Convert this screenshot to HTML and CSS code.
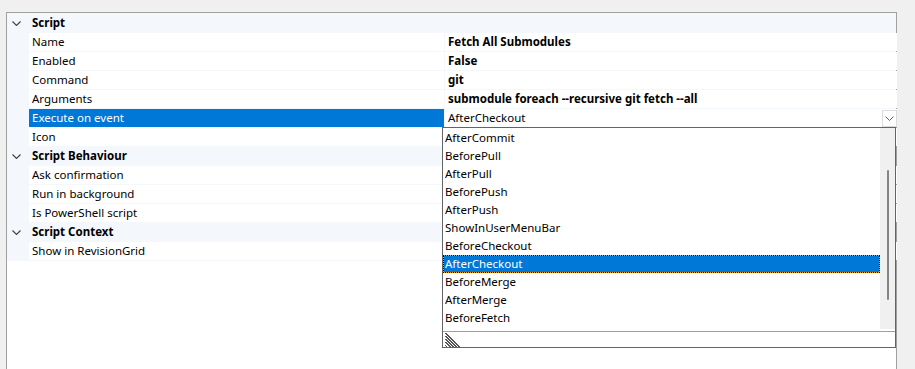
FILE: index.html
```html
<!DOCTYPE html>
<html lang="en">
<head>
    <meta charset="UTF-8">
    <title>Script Properties</title>
    <link rel="stylesheet" href="styles.css">
</head>
<body>
    <div class="grid">
        <div class="props">
            <div class="row category">
                <span class="toggle"><svg width="9" height="5" viewBox="0 0 9 5"><path d="M0.5 0.5 L4.5 4.5 L8.5 0.5" fill="none" stroke="#404040" stroke-width="1.1"/></svg></span>
                <span class="label">Script</span>
            </div>
            <div class="row"><span></span><span class="label">Name</span><span class="value bold">Fetch All Submodules</span></div>
            <div class="row"><span></span><span class="label">Enabled</span><span class="value bold">False</span></div>
            <div class="row"><span></span><span class="label">Command</span><span class="value bold">git</span></div>
            <div class="row"><span></span><span class="label">Arguments</span><span class="value bold">submodule foreach --recursive git fetch --all</span></div>
            <div class="row selected">
                <span></span><span class="label">Execute on event</span>
                <span class="value combo">
                    <span>AfterCheckout</span>
                    <span class="drop-btn"><svg width="9" height="5" viewBox="0 0 9 5"><path d="M0.5 0.5 L4.5 4.5 L8.5 0.5" fill="none" stroke="#606060" stroke-width="1"/></svg></span>
                </span>
            </div>
            <div class="row"><span></span><span class="label">Icon</span><span class="value"></span></div>
            <div class="row category">
                <span class="toggle"><svg width="9" height="5" viewBox="0 0 9 5"><path d="M0.5 0.5 L4.5 4.5 L8.5 0.5" fill="none" stroke="#404040" stroke-width="1.1"/></svg></span>
                <span class="label">Script Behaviour</span>
            </div>
            <div class="row"><span></span><span class="label">Ask confirmation</span><span class="value"></span></div>
            <div class="row"><span></span><span class="label">Run in background</span><span class="value"></span></div>
            <div class="row"><span></span><span class="label">Is PowerShell script</span><span class="value"></span></div>
            <div class="row category">
                <span class="toggle"><svg width="9" height="5" viewBox="0 0 9 5"><path d="M0.5 0.5 L4.5 4.5 L8.5 0.5" fill="none" stroke="#404040" stroke-width="1.1"/></svg></span>
                <span class="label">Script Context</span>
            </div>
            <div class="row"><span></span><span class="label">Show in RevisionGrid</span><span class="value"></span></div>
        </div>

        <!-- open dropdown of "Execute on event" -->
        <div class="dropdown">
            <div class="list-body">
                <ul class="items">
                    <li>AfterCommit</li>
                    <li>BeforePull</li>
                    <li>AfterPull</li>
                    <li>BeforePush</li>
                    <li>AfterPush</li>
                    <li>ShowInUserMenuBar</li>
                    <li>BeforeCheckout</li>
                    <li class="selected">AfterCheckout</li>
                    <li>BeforeMerge</li>
                    <li>AfterMerge</li>
                    <li>BeforeFetch</li>
                </ul>
                <div class="scroll"><div class="thumb"></div></div>
            </div>
            <div class="grip-bar">
                <svg width="16" height="14" viewBox="0 0 16 14" shape-rendering="crispEdges">
                    <g stroke="#555" stroke-width="1">
                        <path d="M0 0 L14 14"/>
                        <path d="M0 3 L11 14"/>
                        <path d="M0 6 L8 14"/>
                        <path d="M0 9 L5 14"/>
                        <path d="M0 12 L2 14"/>
                        <path d="M1 0 L15 14"/>
                        <path d="M1 3 L12 14"/>
                        <path d="M1 6 L9 14"/>
                        <path d="M1 9 L6 14"/>
                    </g>
                </svg>
            </div>
        </div>
    </div>
</body>
</html>
```

FILE: styles.css
```css
/* Reset */
body, ul {
    margin: 0;
    padding: 0;
}

body {
    font-family: "Noto Sans", sans-serif;
    font-size: 11.5px;
    color: #000;
    background-color: #f0f0f0;
    height: 369px;
    overflow: hidden;
}

/* Property grid frame */
.grid {
    position: relative;
    width: 891px;
    height: 358px;
    margin: 12px 0 0 6px;
    box-sizing: border-box;
    border: 1px solid #a0a0a0;
    border-bottom: none;
    background-color: #fff;
}

.props {
    display: flex;
    flex-direction: column;
    gap: 1px;
    padding: 1px 0;
    background-color: #f4f7fc;
}

.row {
    display: grid;
    grid-template-columns: 21px 415px 452px;
    column-gap: 1px;
    height: 18px;
    line-height: 18px;
}

.row .label {
    padding-left: 3px;
    background-color: #fff;
    white-space: nowrap;
}

.row .value {
    padding-left: 3px;
    background-color: #fff;
    white-space: nowrap;
}

.bold {
    font-weight: bold;
}

/* Category rows */
.row.category {
    grid-template-columns: 21px 1fr;
}

.row.category .label {
    background-color: transparent;
    font-weight: bold;
}

.toggle {
    display: flex;
    align-items: center;
    padding-left: 5px;
}

/* Selected row */
.row.selected .label {
    background-color: #0078d7;
    color: #fff;
}

.value.combo {
    display: flex;
    justify-content: space-between;
}

.drop-btn {
    display: flex;
    align-items: center;
    justify-content: center;
    width: 15px;
    height: 17px;
    margin-top: 1px;
    box-sizing: border-box;
    border: 1px solid #dcdcdc;
    background-color: #fff;
}

/* Dropdown list */
.dropdown {
    position: absolute;
    left: 435px;
    top: 114px;
    width: 454px;
    height: 221px;
    box-sizing: border-box;
    border: 1px solid #646464;
    background-color: #fff;
    display: flex;
    flex-direction: column;
}

.list-body {
    display: flex;
    height: 203px;
}

.items {
    flex: 1;
    list-style-type: none;
    padding-top: 1px;
}

.items li {
    height: 18px;
    line-height: 18px;
    padding-left: 2px;
    white-space: nowrap;
}

.items li.selected {
    background-color: #0078d7;
    color: #fff;
    outline: 1px dotted #000;
    outline-offset: -1px;
    box-shadow: inset 0 0 0 1px #f0a030;
}

.scroll {
    width: 15px;
    height: 201px;
    background-color: #f0f0f0;
}

.thumb {
    width: 2px;
    height: 130px;
    margin: 42px 0 0 7px;
    border-radius: 1px;
    background-color: #858585;
}

.grip-bar {
    height: 16px;
    border-top: 1px solid #a0a0a0;
    padding: 1px 0 0 2px;
    box-sizing: border-box;
}

.grip-bar svg {
    display: block;
}
```
